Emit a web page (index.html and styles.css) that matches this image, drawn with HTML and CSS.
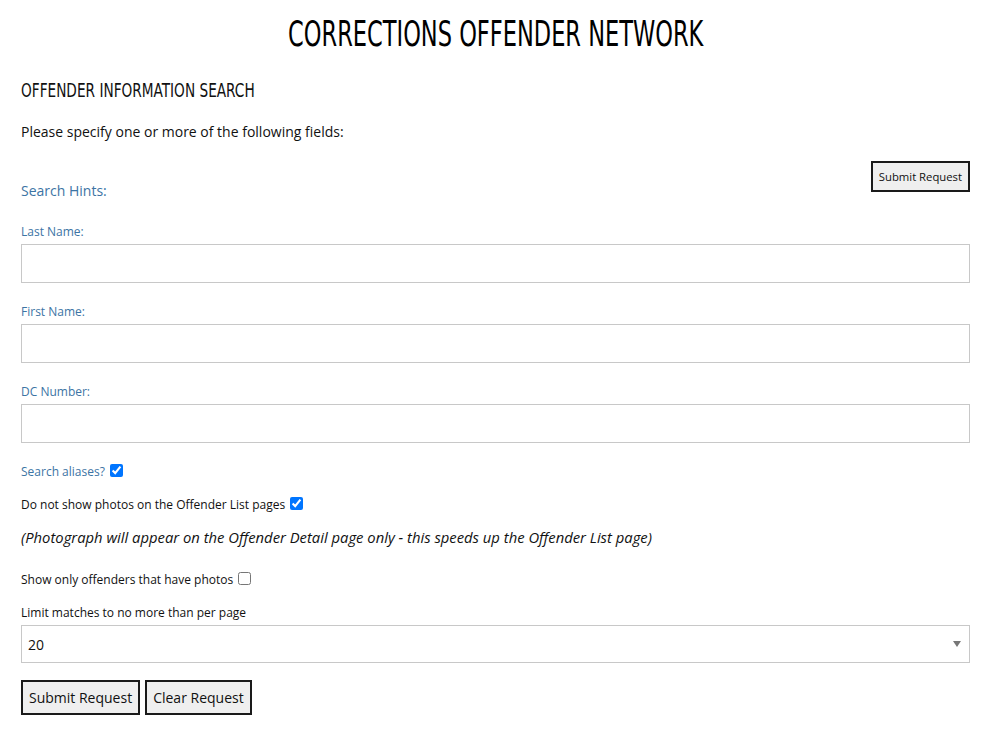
FILE: index.html
```html
<!DOCTYPE html>
<html>
<head>
<meta charset="utf-8">
<title>Corrections Offender Network</title>
<link rel="stylesheet" href="styles.css">
</head>
<body>
<div class="page">
  <h1 class="title"><span class="title-text">CORRECTIONS OFFENDER NETWORK</span></h1>
  <h2 class="subtitle"><span class="subtitle-text">OFFENDER INFORMATION SEARCH</span></h2>
  <p class="intro">Please specify one or more of the following fields:</p>
  <div class="hints-row">
    <span class="hints">Search Hints:</span>
    <button class="btn btn-small" type="button">Submit Request</button>
  </div>
  <div class="field">
    <label class="label" for="ln">Last Name:</label>
    <input class="text-input" id="ln" type="text">
  </div>
  <div class="field">
    <label class="label" for="fn">First Name:</label>
    <input class="text-input" id="fn" type="text">
  </div>
  <div class="field">
    <label class="label" for="dc">DC Number:</label>
    <input class="text-input" id="dc" type="text">
  </div>
  <div class="check-row blue aliases">Search aliases? <input class="check" type="checkbox" checked></div>
  <div class="check-row nophotos">Do not show photos on the Offender List pages <input class="check" type="checkbox" checked></div>
  <p class="note">(Photograph will appear on the Offender Detail page only - this speeds up the Offender List page)</p>
  <div class="check-row photos">Show only offenders that have photos <input class="check" type="checkbox"></div>
  <div class="limit-label">Limit matches to no more than per page</div>
  <div class="select-wrap">
    <select class="select">
      <option>20</option>
      <option>50</option>
      <option>100</option>
    </select>
  </div>
  <div class="actions">
    <button class="btn" type="button">Submit Request</button>
    <button class="btn" type="button">Clear Request</button>
  </div>
</div>
</body>
</html>
```
FILE: styles.css
```css
body {
  margin: 0;
  background: #ffffff;
  color: #111;
  font-family: "Open Sans", "Noto Sans", sans-serif;
}
.page {
  padding: 12px 29px 0 21px;
}
.title {
  margin: 0;
  text-align: center;
  font-family: "DejaVu Sans Condensed", "DejaVu Sans", sans-serif;
  font-weight: normal;
  font-size: 36px;
  line-height: 44px;
  color: #000;
}
.title-text {
  display: inline-block;
  transform: scaleX(0.695);
  transform-origin: center;
  white-space: nowrap;
}
.subtitle {
  margin: 22px 0 0;
  font-family: "DejaVu Sans Condensed", "DejaVu Sans", sans-serif;
  font-weight: normal;
  font-size: 20px;
  line-height: 24px;
  color: #111;
}
.subtitle-text {
  display: inline-block;
  transform: scaleX(0.76);
  transform-origin: left center;
  white-space: nowrap;
}
.intro {
  margin: 20px 0 0;
  font-size: 14px;
  line-height: 20px;
}
.hints-row {
  display: flex;
  justify-content: space-between;
  align-items: flex-end;
  margin-top: 19px;
  margin-bottom: 23px;
}
.hints {
  font-size: 14px;
  line-height: 20px;
  color: #3c74a4;
}
.btn {
  font-family: "Open Sans", "Noto Sans", sans-serif;
  font-size: 14px;
  background: #efefef;
  border: 2px solid #1a1a1a;
  color: #111;
  padding: 0 6px;
  height: 35px;
  margin: 0;
}
.btn-small {
  font-size: 11.3px;
  height: 31px;
  padding: 0 6px;
  margin-bottom: 9px;
}
.field {
  margin-top: 21px;
}
.label {
  display: block;
  font-size: 12px;
  line-height: 16px;
  color: #3c74a4;
  margin-bottom: 4px;
}
.text-input {
  display: block;
  box-sizing: border-box;
  width: 100%;
  height: 39px;
  border: 1px solid #c8c8c8;
  background: #fff;
  margin: 0;
}
.check-row {
  font-size: 12px;
  line-height: 16px;
  display: flex;
  align-items: center;
  white-space: pre;
}
.check-row.blue {
  color: #3c74a4;
}
.aliases {
  margin-top: 21px;
}
.nophotos {
  margin-top: 17px;
}
.check {
  margin: 0 0 3px 2px;
  width: 13px;
  height: 13px;
}
.note {
  margin: 14px 0 0;
  font-size: 14.8px;
  font-style: italic;
  line-height: 20px;
}
.photos {
  margin-top: 25px;
}
.limit-label {
  font-size: 12px;
  line-height: 16px;
  margin-top: 17px;
}
.select-wrap {
  position: relative;
  margin-top: 4px;
}
.select-wrap::after {
  content: "";
  position: absolute;
  right: 9px;
  top: 16px;
  border-left: 4px solid transparent;
  border-right: 4px solid transparent;
  border-top: 6px solid #777;
  pointer-events: none;
}
.select {
  display: block;
  box-sizing: border-box;
  width: 100%;
  height: 38px;
  -webkit-appearance: none;
  appearance: none;
  border: 1px solid #c8c8c8;
  border-radius: 0;
  background: #fff;
  font-family: "Open Sans", "Noto Sans", sans-serif;
  font-size: 14px;
  color: #111;
  padding: 0 6px;
}
.actions {
  display: flex;
  gap: 5px;
  margin-top: 17px;
}
```
